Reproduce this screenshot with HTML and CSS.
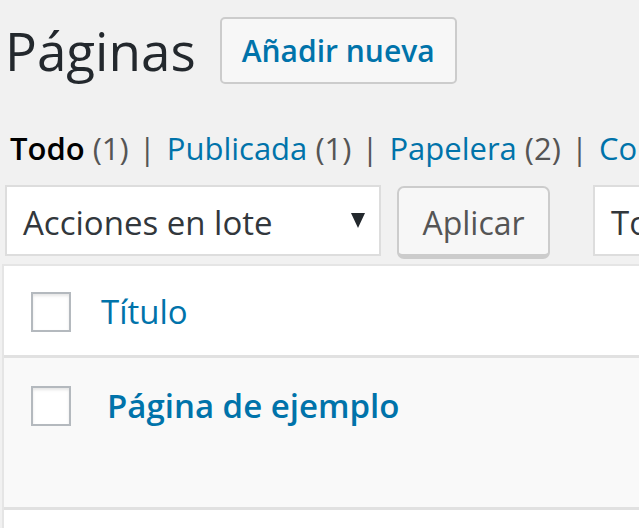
FILE: index.html
```html
<!DOCTYPE html>
<html lang="es">
<head>
<meta charset="utf-8">
<title>Páginas</title>
<link rel="stylesheet" href="styles.css">
</head>
<body>
<div class="wrap">
  <div class="heading">
    <h1 class="title">Páginas</h1>
    <a class="add-new" href="#">Añadir nueva</a>
  </div>
  <ul class="subsubsub">
    <li class="current">Todo <span class="count">(1)</span></li>
    <li class="sep">|</li>
    <li><a href="#">Publicada <span class="count">(1)</span></a></li>
    <li class="sep">|</li>
    <li><a href="#">Papelera <span class="count">(2)</span></a></li>
    <li class="sep">|</li>
    <li><a href="#">Cornerstone content</a></li>
  </ul>
  <div class="tablenav">
    <div class="select bulk">
      <span>Acciones en lote</span>
      <span class="arrow"></span>
    </div>
    <button class="apply">Aplicar</button>
    <div class="select dates"><span>Todas las fechas</span></div>
  </div>
</div>
<div class="table">
  <div class="row head">
    <span class="check"></span>
    <a class="col-title" href="#">Título</a>
  </div>
  <div class="row item">
    <span class="check"></span>
    <a class="row-title" href="#">Página de ejemplo</a>
  </div>
  <div class="row foot"></div>
</div>
</body>
</html>
```

FILE: styles.css
```css
html, body {
  margin: 0;
  padding: 0;
  overflow: hidden;
  background: #f1f1f1;
}
body {
  font-family: "Open Sans", "Noto Sans", sans-serif;
  color: #23282d;
  width: 639px;
  height: 528px;
}
a { text-decoration: none; color: #0073aa; }

.wrap {
  padding-left: 5px;
}
.heading {
  display: flex;
  align-items: center;
  gap: 24px;
  padding-top: 17px;
  height: 67px;
}
.title {
  margin: 0;
  font-size: 53px;
  font-weight: 400;
  line-height: 67px;
  color: #23282d;
}
.add-new {
  box-sizing: border-box;
  height: 67px;
  padding: 0 20px;
  display: flex;
  align-items: center;
  border: 2px solid #ccc;
  border-radius: 5px;
  background: #f7f7f7;
  font-size: 30px;
  font-weight: 600;
  color: #0073aa;
}

.subsubsub {
  list-style: none;
  margin: 44px 0 0 5px;
  padding: 0;
  display: flex;
  white-space: nowrap;
  font-size: 31px;
  line-height: 40px;
}
.subsubsub li { flex-shrink: 0; }
.subsubsub li.current { color: #000; font-weight: 600; }
.subsubsub .count { color: #555; font-weight: 400; }
.subsubsub .sep { color: #555; padding: 0 11px 0 10px; }

.tablenav {
  display: flex;
  align-items: flex-start;
  margin-top: 17px;
  white-space: nowrap;
}
.select {
  box-sizing: border-box;
  height: 71px;
  border: 2px solid #ddd;
  background: #fff;
  display: flex;
  align-items: center;
  font-size: 33px;
  color: #32373c;
  flex-shrink: 0;
  padding-top: 3px;
}
.bulk {
  width: 376px;
  padding-left: 16px;
  justify-content: space-between;
  padding-right: 14px;
}
.arrow {
  width: 0;
  height: 0;
  margin-top: -3px;
  border-left: 7px solid transparent;
  border-right: 7px solid transparent;
  border-top: 15px solid #23282d;
}
.apply {
  box-sizing: border-box;
  flex-shrink: 0;
  margin-left: 16px;
  width: 153px;
  height: 73px;
  margin-top: 1px;
  border: 2px solid #ccc;
  border-bottom-width: 5px;
  border-radius: 7px;
  background: #f7f7f7;
  font-family: inherit;
  font-size: 32px;
  color: #555;
  padding: 3px 0 0;
}
.dates {
  margin-left: 43px;
  width: 300px;
  padding-left: 16px;
}

.table {
  margin-top: 5px;
  margin-left: 2px;
  width: 700px;
  border-left: 2px solid #e5e5e5;
  border-top: 2px solid #e5e5e5;
}
.row {
  display: flex;
  align-items: flex-start;
  box-sizing: border-box;
}
.check {
  box-sizing: border-box;
  width: 40px;
  height: 40px;
  margin-left: 27px;
  border: 2px solid #b4b9be;
  background: #fff;
  box-shadow: inset 0 2px 3px rgba(0,0,0,0.1);
  flex-shrink: 0;
}
.head {
  background: #fff;
  height: 92px;
  padding-top: 26px;
  border-bottom: 3px solid #e1e1e1;
}
.col-title {
  margin-left: 30px;
  font-size: 33px;
  line-height: 40px;
}
.item {
  background: #f9f9f9;
  height: 152px;
  padding-top: 28px;
  border-bottom: 3px solid #e1e1e1;
}
.row-title {
  margin-left: 36px;
  font-size: 33px;
  font-weight: 600;
  line-height: 40px;
}
.foot {
  background: #fff;
  height: 40px;
}
```
